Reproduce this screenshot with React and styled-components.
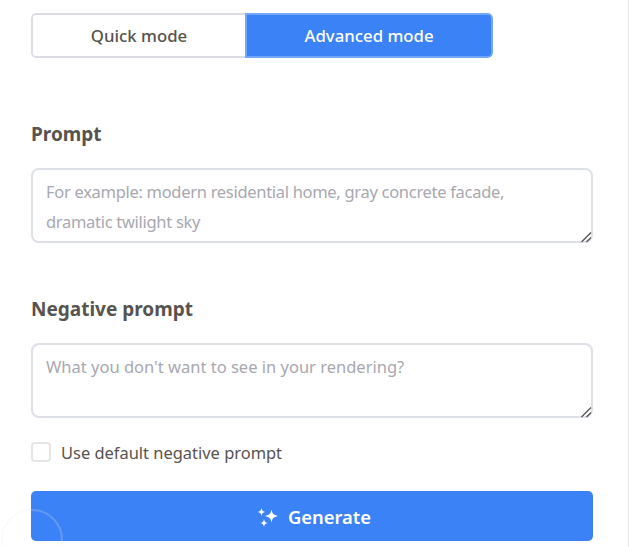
import React from "react";
import styled, { createGlobalStyle } from "styled-components";

const Global = createGlobalStyle`
  html, body { margin: 0; padding: 0; background: #fff; }
  body { font-family: "Noto Sans", "Open Sans", sans-serif; overflow: hidden; }
`;

const Page = styled.div`
  width: 629px;
  height: 547px;
  box-sizing: border-box;
  border-right: 1px solid #e9e9ec;
  padding: 13px 36px 0 31px;
  display: flex;
  flex-direction: column;
  position: relative;
  overflow: hidden;
`;

const ModeToggle = styled.div`
  display: flex;
  width: 462px;
  height: 45px;
  border-radius: 5px;
  overflow: hidden;
`;

const ModeButton = styled.div`
  width: ${(p) => (p.$active ? "248px" : "214px")};
  box-sizing: border-box;
  display: flex;
  align-items: center;
  justify-content: center;
  font-size: 16.8px;
  font-weight: 500;
  color: ${(p) => (p.$active ? "#fff" : "#57534e")};
  background: ${(p) => (p.$active ? "#3b82f6" : "#fff")};
  border: ${(p) => (p.$active ? "2px solid #71a6f8" : "2px solid #dcdde4")};
  border-right: ${(p) => (p.$active ? "2px solid #71a6f8" : "none")};
  border-radius: ${(p) => (p.$active ? "0 5px 5px 0" : "5px 0 0 5px")};
  flex: none;
`;

const Label = styled.div`
  font-size: 19px;
  line-height: 24px;
  font-weight: 700;
  color: #57534e;
  margin-top: ${(p) => p.$top}px;
`;

const PromptBox = styled.div`
  position: relative;
  width: 562px;
  height: 75px;
  margin-top: 22px;
`;

const Prompt = styled.textarea`
  display: block;
  width: 100%;
  height: 100%;
  box-sizing: border-box;
  padding: 7px 50px 7px 13px;
  border: 2px solid #dee0e7;
  border-radius: 8px;
  font-family: inherit;
  font-size: 16.5px;
  letter-spacing: ${(p) => p.$spacing}px;
  line-height: 30px;
  color: #57534e;
  outline: none;
  resize: none;
  &::placeholder { color: #a8a8b0; opacity: 1; }
`;

const ResizeGrip = styled.svg`
  position: absolute;
  right: 1px;
  bottom: 0;
  width: 12px;
  height: 12px;
  pointer-events: none;
`;

const CheckRow = styled.label`
  display: flex;
  align-items: center;
  gap: 10px;
  margin-top: 23px;
  height: 22px;
  font-size: 16.45px;
  color: #57534e;
`;

const CheckBox = styled.span`
  width: 20px;
  height: 20px;
  box-sizing: border-box;
  border: 2px solid #e6e6e8;
  border-radius: 4px;
  background: #fff;
  flex: none;
`;

const GenerateButton = styled.button`
  width: 562px;
  height: 50px;
  margin-top: 28px;
  border: none;
  border-radius: 5px;
  background: #3b82f6;
  color: #fff;
  font-family: inherit;
  font-size: 18.4px;
  font-weight: 600;
  display: flex;
  align-items: center;
  justify-content: center;
  gap: 9px;
  padding: 0 0 0 4px;
  flex: none;
`;

const Ring = styled.div`
  position: absolute;
  left: 1px;
  top: 509px;
  width: 62px;
  height: 62px;
  box-sizing: border-box;
  border-radius: 50%;
  border: 2px solid rgba(235, 238, 243, 0.22);
  pointer-events: none;
`;

const Grip = () => (
  <ResizeGrip viewBox="0 0 12 12" aria-hidden="true">
    <path d="M1.5 11 L11 1.5 M6.5 11 L11 6.5" stroke="#555" strokeWidth="1.3" fill="none" />
  </ResizeGrip>
);

const Sparkles = () => (
  <svg width="22" height="24" viewBox="0 0 22 24" fill="#fff" aria-hidden="true">
    <path d="M14.5 5.5 C15.4 9.8 16.2 10.8 21 12 C16.2 13.2 15.4 14.2 14.5 18.5 C13.6 14.2 12.8 13.2 8 12 C12.8 10.8 13.6 9.8 14.5 5.5Z" />
    <path d="M4.5 3.8 C5 6.6 5.5 7.2 8.4 8 C5.5 8.8 5 9.4 4.5 12.2 C4 9.4 3.5 8.8 0.6 8 C3.5 7.2 4 6.6 4.5 3.8Z" />
    <path d="M7 15 C7.5 17.6 8 18.2 10.6 19 C8 19.8 7.5 20.4 7 23 C6.5 20.4 6 19.8 3.4 19 C6 18.2 6.5 17.6 7 15Z" />
  </svg>
);

export default function App() {
  return (
    <>
      <Global />
      <Page>
        <ModeToggle>
          <ModeButton>Quick mode</ModeButton>
          <ModeButton $active>Advanced mode</ModeButton>
        </ModeToggle>
        <Label $top={64}>Prompt</Label>
        <PromptBox>
          <Prompt $spacing={-0.3} placeholder="For example: modern residential home, gray concrete facade, dramatic twilight sky" />
          <Grip />
        </PromptBox>
        <Label $top={54}>Negative prompt</Label>
        <PromptBox>
          <Prompt $spacing={0} placeholder="What you don't want to see in your rendering?" />
          <Grip />
        </PromptBox>
        <CheckRow>
          <CheckBox />
          Use default negative prompt
        </CheckRow>
        <GenerateButton>
          <Sparkles />
          Generate
        </GenerateButton>
        <Ring />
      </Page>
    </>
  );
}
